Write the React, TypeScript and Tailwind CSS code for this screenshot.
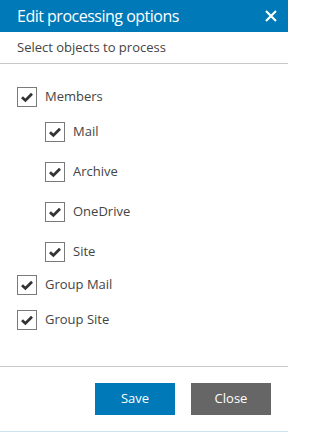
import React from "react";

const font = { fontFamily: '"Open Sans", "Segoe UI", sans-serif' };

function Check({ label, indent, className }: { label: string; indent?: boolean; className?: string }) {
  return (
    <div className={`flex items-center h-5 ${indent ? "pl-7" : ""} ${className ?? ""}`}>
      <div className="w-5 h-5 border border-[#7a7a7a] bg-white flex items-center justify-center">
        <svg width="14" height="14" viewBox="0 0 14 14">
          <path d="M2 7.2 L5.4 10.4 L12 3.8" fill="none" stroke="#333" strokeWidth="2.8" />
        </svg>
      </div>
      <span className="ml-2 text-[13px] text-[#444]">{label}</span>
    </div>
  );
}

export default function App() {
  return (
    <div className="w-[288px] h-[432px] bg-white flex flex-col border-b border-[#cfe3ee]" style={font}>
      <div className="h-8 bg-[#0079b8] flex items-center justify-between pl-[17px] pr-[10px] shrink-0">
        <span className="text-white text-[16px] leading-none tracking-[-0.5px]">Edit processing options</span>
        <svg width="14" height="14" viewBox="0 0 14 14">
          <path d="M2 2 L12 12 M12 2 L2 12" stroke="white" strokeWidth="2.2" />
        </svg>
      </div>
      <div className="h-8 border-b border-[#c8c8c8] flex items-center px-[17px] shrink-0">
        <span className="text-[13px] text-[#444]">Select objects to process</span>
      </div>
      <div className="flex-1 flex flex-col px-[17px] pt-[23px]">
        <Check label="Members" />
        <Check label="Mail" indent className="mt-[15px]" />
        <Check label="Archive" indent className="mt-5" />
        <Check label="OneDrive" indent className="mt-5" />
        <Check label="Site" indent className="mt-5" />
        <Check label="Group Mail" className="mt-[13px]" />
        <Check label="Group Site" className="mt-[15px]" />
      </div>
      <div className="h-[65px] border-t border-[#c8c8c8] flex items-start justify-end gap-4 pt-4 pr-[17px] shrink-0">
        <button className="w-20 h-8 bg-[#0079b8] text-white text-[13px]">Save</button>
        <button className="w-20 h-8 bg-[#666666] text-white text-[13px]">Close</button>
      </div>
    </div>
  );
}
